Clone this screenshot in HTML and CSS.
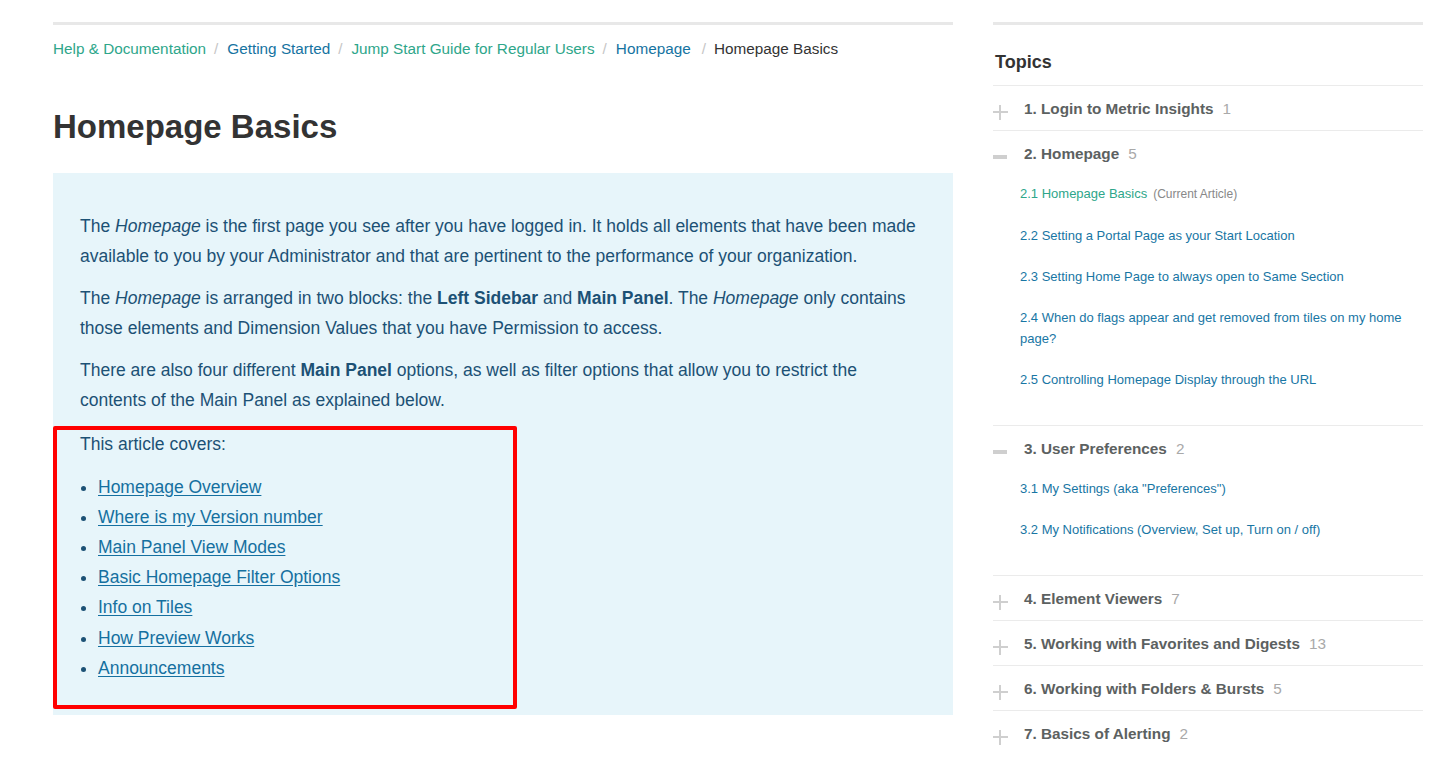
FILE: index.html
```html
<!DOCTYPE html>
<html>
<head>
<meta charset="utf-8">
<link rel="stylesheet" href="styles.css">
</head>
<body>
<div class="page">
  <main class="main">
    <nav class="crumbs">
      <a class="c-green" href="#">Help &amp; Documentation</a><span class="sep">/</span><a class="c-blue" href="#">Getting Started</a><span class="sep">/</span><a class="c-green" href="#">Jump Start Guide for Regular Users</a><span class="sep sep-3">/</span><a class="c-blue" href="#">Homepage</a><span class="sep sep-4">/</span><span class="c-cur">Homepage Basics</span>
    </nav>
    <h1 class="title">Homepage Basics</h1>
    <section class="article">
      <p>The <em>Homepage</em> is the first page you see after you have logged in. It holds all elements that have been made available to you by your Administrator and that are pertinent to the performance of your organization.</p>
      <p>The <em>Homepage</em> is arranged in two blocks: the <strong>Left Sidebar</strong> and <strong>Main Panel</strong>. The <em>Homepage</em> only contains those elements and Dimension Values that you have Permission to access.</p>
      <p>There are also four different <strong>Main Panel</strong> options, as well as filter options that allow you to restrict the contents of the Main Panel as explained below.</p>
      <div class="covers">
        <p class="covers-title">This article covers:</p>
        <ul class="covers-list">
          <li><a href="#">Homepage Overview</a></li>
          <li><a href="#">Where is my Version number</a></li>
          <li><a href="#">Main Panel View Modes</a></li>
          <li><a href="#">Basic Homepage Filter Options</a></li>
          <li><a href="#">Info on Tiles</a></li>
          <li><a href="#">How Preview Works</a></li>
          <li><a href="#">Announcements</a></li>
        </ul>
      </div>
    </section>
  </main>
  <aside class="side">
    <h2 class="topics">Topics</h2>
    <div class="topic">
      <div class="topic-head"><span class="ico plus"></span><span class="t-name">1. Login to Metric Insights</span><span class="t-count">1</span></div>
    </div>
    <div class="topic">
      <div class="topic-head"><span class="ico minus"></span><span class="t-name">2. Homepage</span><span class="t-count">5</span></div>
      <ul class="subs">
        <li><a class="current" href="#">2.1 Homepage Basics</a><span class="cur-note">(Current Article)</span></li>
        <li><a href="#">2.2 Setting a Portal Page as your Start Location</a></li>
        <li><a href="#">2.3 Setting Home Page to always open to Same Section</a></li>
        <li><a href="#">2.4 When do flags appear and get removed from tiles on my home page?</a></li>
        <li><a href="#">2.5 Controlling Homepage Display through the URL</a></li>
      </ul>
    </div>
    <div class="topic">
      <div class="topic-head"><span class="ico minus"></span><span class="t-name">3. User Preferences</span><span class="t-count">2</span></div>
      <ul class="subs">
        <li><a href="#">3.1 My Settings (aka "Preferences")</a></li>
        <li><a href="#">3.2 My Notifications (Overview, Set up, Turn on / off)</a></li>
      </ul>
    </div>
    <div class="topic">
      <div class="topic-head"><span class="ico plus"></span><span class="t-name">4. Element Viewers</span><span class="t-count">7</span></div>
    </div>
    <div class="topic">
      <div class="topic-head"><span class="ico plus"></span><span class="t-name">5. Working with Favorites and Digests</span><span class="t-count">13</span></div>
    </div>
    <div class="topic">
      <div class="topic-head"><span class="ico plus"></span><span class="t-name">6. Working with Folders &amp; Bursts</span><span class="t-count">5</span></div>
    </div>
    <div class="topic">
      <div class="topic-head"><span class="ico plus"></span><span class="t-name">7. Basics of Alerting</span><span class="t-count">2</span></div>
    </div>
  </aside>
</div>
</body>
</html>
```

FILE: styles.css
```css
* { box-sizing: border-box; }
html, body { margin: 0; padding: 0; background: #fff; }
body { font-family: Arial, "Liberation Sans", sans-serif; color: #333; }
a { text-decoration: none; }

.page {
  display: flex;
  gap: 40px;
  padding: 22px 0 0 53px;
  height: 757px;
  overflow: hidden;
}

.main {
  width: 900px;
  flex: none;
  border-top: 3px solid #e8e8e8;
}

.crumbs {
  margin-top: 14px;
  font-size: 15.3px;
  line-height: 20px;
  white-space: nowrap;
}
.c-green { color: #2ea68a; }
.c-blue { color: #1573a1; }
.c-cur { color: #333; }
.sep { color: #c6c6c6; padding: 0 9px 0 8px; }
.sep-3 { padding-right: 9px; }
.sep-4 { padding: 0 8px 0 11px; }

.title {
  margin: 48px 0 26px;
  font-size: 33px;
  line-height: 40px;
  font-weight: bold;
  color: #333;
}

.article {
  background: #e7f5fa;
  padding: 39px 27px 6px;
  color: #1c5175;
  font-size: 17.5px;
  line-height: 29.6px;
}
.article p { margin: 0 0 13px; }

.covers {
  width: 464px;
  margin: -3px 0 0 -27px;
  border: 4px solid #ff0000;
  border-radius: 2px;
  padding: 2px 0 22px 23px;
}
.covers .covers-title {
  margin: 0;
  line-height: 24px;
}
.covers-list {
  margin: 16px 0 0;
  padding-left: 18px;
  list-style: disc;
}
.covers-list li { line-height: 30.2px; }
.covers-list a { color: #1570a0; text-decoration: underline; text-underline-offset: 2px; }

.side {
  width: 430px;
  flex: none;
  border-top: 3px solid #e8e8e8;
}
.topics {
  margin: 25px 0 0 2px;
  padding-bottom: 11px;
  font-size: 18px;
  line-height: 24px;
  font-weight: bold;
  color: #333;
}
.topic { border-top: 1px solid #ebebeb; }
.topic-head {
  height: 44px;
  padding-top: 2px;
  display: flex;
  align-items: center;
  font-size: 15.3px;
}
.ico {
  position: relative;
  width: 15px;
  height: 15px;
  margin-right: 16px;
  flex: none;
  top: 3px;
}
.plus::before, .plus::after {
  content: "";
  position: absolute;
  background: #cfcfcf;
}
.plus::before { left: 0; right: 0; top: 6px; height: 2px; }
.plus::after { top: 0; bottom: 0; left: 6px; width: 2px; }
.minus::before {
  content: "";
  position: absolute;
  left: 0; right: 1px; top: 5px; height: 4px;
  background: #cfcfcf;
}
.t-name { font-weight: bold; color: #5c6161; }
.t-count { color: #a9a9a9; margin-left: 9px; }

.subs {
  list-style: none;
  margin: -2px 0 0;
  padding: 0 0 25px 27px;
  font-size: 13px;
  line-height: 21px;
}
.subs li { padding: 10px 0; }
.subs a { color: #1876a4; }
.subs a.current { color: #2ea68a; }
.cur-note { color: #888; font-size: 12px; margin-left: 6px; }
```
